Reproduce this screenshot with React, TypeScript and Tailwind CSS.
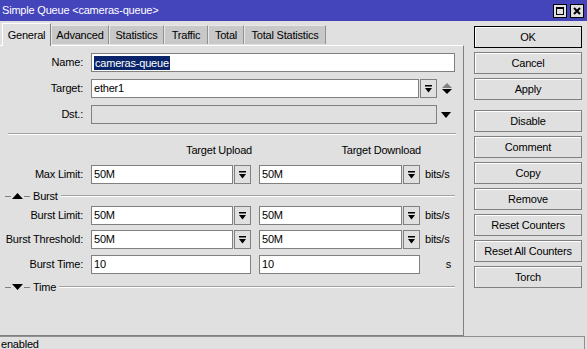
import React from 'react';

const font = "font-['Liberation_Sans',Arial,sans-serif]";

function DropBtn() {
  return (
    <div className="w-[17px] h-[19px] ml-px shrink-0 border border-[#808080] bg-[#e0e0e0] flex items-center justify-center">
      <svg width="7" height="8" viewBox="0 0 7 8">
        <rect x="0" y="0" width="7" height="1.5" fill="#000" />
        <polygon points="0,3 7,3 3.5,7.5" fill="#000" />
      </svg>
    </div>
  );
}

function Field({ value, w, selected }: { value?: string; w: string; selected?: boolean }) {
  return (
    <div className={`h-[19px] ${w} shrink-0 bg-white border border-[#808080] pl-[2px] flex items-center text-[11px] text-black`}>
      {selected ? <span className="bg-[#0a246a] text-white leading-[14px] px-px">{value}</span> : value}
    </div>
  );
}

function Label({ text }: { text: string }) {
  return <div className="w-[84px] shrink-0 text-right pr-px text-[11px] text-black">{text}</div>;
}

function Section({ title, up }: { title: string; up?: boolean }) {
  return (
    <div className="h-[14px] flex items-center pl-[5px] pr-[8px] text-[11px]">
      <div className="w-[6px] h-px bg-[#808080]" />
      <svg width="11" height="6" viewBox="0 0 11 6" className="mx-px">
        {up ? <polygon points="0,6 11,6 5.5,0" fill="#000" /> : <polygon points="0,0 11,0 5.5,6" fill="#000" />}
      </svg>
      <div className="w-[6px] h-px bg-[#808080]" />
      <span className="ml-[3px] mr-[3px] text-black">{title}</span>
      <div className="flex-1 h-[2px] border-t border-[#a0a0a0] border-b border-b-white" />
    </div>
  );
}

function RateRow({ label, up, down, unit }: { label: string; up: string; down: string; unit: string }) {
  return (
    <div className="flex items-center">
      <Label text={label} />
      <div className="ml-[7px] flex">
        <Field value={up} w="w-[142px]" />
        <DropBtn />
      </div>
      <div className="ml-[8px] flex">
        <Field value={down} w="w-[143px]" />
        <DropBtn />
      </div>
      <div className="ml-[5px] text-[11px] text-black">{unit}</div>
    </div>
  );
}

function Btn({ text, def, className = '' }: { text: string; def?: boolean; className?: string }) {
  return (
    <div
      className={`h-[22px] w-[108px] border ${def ? 'border-black' : 'border-[#808080]'} bg-[#e0e0e0] shadow-[inset_1px_1px_0_#ffffff] flex items-center justify-center text-[11px] text-black ${className}`}
    >
      {text}
    </div>
  );
}

const tabs = [
  { t: 'Advanced', w: 'w-[58px]' },
  { t: 'Statistics', w: 'w-[55px]' },
  { t: 'Traffic', w: 'w-[44px]' },
  { t: 'Total', w: 'w-[36px]' },
  { t: 'Total Statistics', w: 'w-[82px]' },
];

export default function App() {
  return (
    <div className={`w-[587px] h-[349px] overflow-hidden bg-[#e0e0e0] flex flex-col tracking-[-0.2px] ${font}`}>
      {/* title bar */}
      <div className="h-[21px] shrink-0 bg-[#4444bb] flex items-center pl-[2px] pr-[3px]">
        <span className="text-white text-[11px] leading-none">Simple Queue &lt;cameras-queue&gt;</span>
        <div className="ml-auto flex gap-[3px]">
          <div className="w-[14px] h-[14px] bg-[#e0e0e0] border border-black flex items-center justify-center">
            <div className="w-[8px] h-[8px] border border-black border-t-2" />
          </div>
          <div className="w-[14px] h-[14px] bg-[#e0e0e0] border border-black flex items-center justify-center">
            <svg width="8" height="8" viewBox="0 0 8 8">
              <path d="M1 1L7 7M7 1L1 7" stroke="#000" strokeWidth="2" />
            </svg>
          </div>
        </div>
      </div>

      <div className="h-[315px] shrink-0 flex">
        {/* left: tabs + panel */}
        <div className="w-[464px] flex flex-col">
          <div className="h-[24px] flex items-end pl-[2px]">
            <div className="w-[49px] h-[23px] bg-[#e0e0e0] border-l border-t border-white border-r border-r-[#808080] flex items-center justify-center text-[11px] text-black -mb-px z-10">
              General
            </div>
            {tabs.map((tab) => (
              <div
                key={tab.t}
                className={`${tab.w} h-[19px] mb-px bg-[#c8c8c8] border-l border-t border-[#e8e8e8] border-r border-r-[#909090] flex items-center justify-center text-[11px] text-black`}
              >
                {tab.t}
              </div>
            ))}
          </div>

          <div className="flex-1 border-t border-white border-r border-r-[#808080] border-b border-b-[#808080] flex flex-col">
            <div className="mt-[7px] flex items-center">
              <Label text="Name:" />
              <div className="ml-[7px]">
                <Field value="cameras-queue" w="w-[364px]" selected />
              </div>
            </div>

            <div className="mt-[7px] flex items-center">
              <Label text="Target:" />
              <div className="ml-[7px] flex">
                <Field value="ether1" w="w-[328px]" />
                <DropBtn />
              </div>
              <svg width="10" height="11" viewBox="0 0 10 11" className="ml-[5px]">
                <polygon points="0,5 10,5 5,0" fill="#808080" />
                <polygon points="0,6 10,6 5,11" fill="#000" />
              </svg>
            </div>

            <div className="mt-[7px] flex items-center">
              <Label text="Dst.:" />
              <div className="ml-[7px] h-[19px] w-[346px] border border-[#808080] bg-[#e0e0e0]" />
              <svg width="10" height="6" viewBox="0 0 10 6" className="ml-[4px]">
                <polygon points="0,0 10,0 5,6" fill="#000" />
              </svg>
            </div>

            <div className="mt-[9px] ml-[8px] w-[448px] h-[2px] border-t border-[#a0a0a0] border-b border-b-white" />

            <div className="mt-[8px] h-[14px] flex items-center text-[11px] text-black">
              <div className="w-[252px] text-right">Target Upload</div>
              <div className="w-[169px] text-right">Target Download</div>
            </div>

            <div className="mt-[8px]">
              <RateRow label="Max Limit:" up="50M" down="50M" unit="bits/s" />
            </div>

            <div className="mt-[5px]">
              <Section title="Burst" up />
            </div>

            <div className="mt-[3px]">
              <RateRow label="Burst Limit:" up="50M" down="50M" unit="bits/s" />
            </div>
            <div className="mt-[5px]">
              <RateRow label="Burst Threshold:" up="50M" down="50M" unit="bits/s" />
            </div>
            <div className="mt-[6px] flex items-center">
              <Label text="Burst Time:" />
              <div className="ml-[7px]">
                <Field value="10" w="w-[160px]" />
              </div>
              <div className="ml-[8px]">
                <Field value="10" w="w-[161px]" />
              </div>
              <div className="w-[31px] text-right text-[11px] text-black">s</div>
            </div>

            <div className="mt-[6px]">
              <Section title="Time" />
            </div>
          </div>
        </div>

        {/* right: buttons */}
        <div className="ml-[10px] pt-[5px] flex flex-col gap-[4px]">
          <Btn text="OK" def />
          <Btn text="Cancel" />
          <Btn text="Apply" />
          <Btn text="Disable" className="mt-[6px]" />
          <Btn text="Comment" />
          <Btn text="Copy" />
          <Btn text="Remove" />
          <Btn text="Reset Counters" />
          <Btn text="Reset All Counters" />
          <Btn text="Torch" />
        </div>
      </div>

      {/* status bar */}
      <div className="w-[585px] flex-1 border-t border-[#909090] border-r border-r-[#909090] pl-px text-[11px] leading-[13px] text-black pt-px">
        enabled
      </div>
    </div>
  );
}
